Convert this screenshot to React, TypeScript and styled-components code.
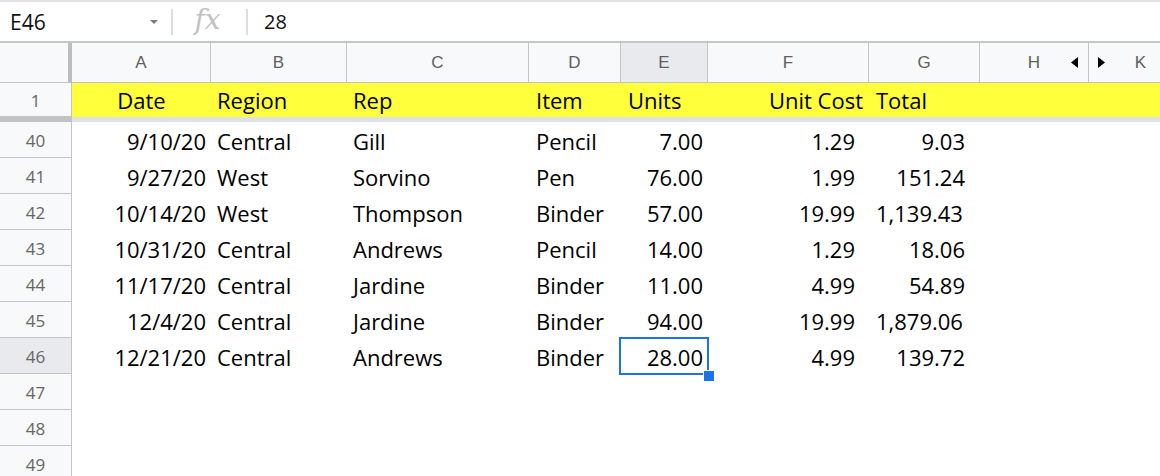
import React from "react";
import styled, { createGlobalStyle } from "styled-components";

const GlobalStyle = createGlobalStyle`
  html, body {
    margin: 0;
    padding: 0;
    background: #ffffff;
    overflow: hidden;
  }
`;

const COLS = "72px 139px 136px 182px 92px 87px 161px 111px 109px 104px";

const Sheet = styled.div`
  width: 1160px;
  height: 476px;
  overflow: hidden;
  border-top: 2px solid #e2e2e2;
  box-sizing: border-box;
  font-family: "Open Sans", "Noto Sans", sans-serif;
`;

const FormulaBar = styled.div`
  display: flex;
  align-items: center;
  height: 39px;
  border-bottom: 2px solid #c6c6c6;
  background: #ffffff;
`;

const NameBox = styled.div`
  display: flex;
  align-items: center;
  width: 171px;
  box-sizing: border-box;
  padding: 0 13px 0 10px;
  font-size: 21px;
  color: #111;
`;

const Caret = styled.span`
  margin-left: auto;
  width: 0;
  height: 0;
  border-left: 4px solid transparent;
  border-right: 4px solid transparent;
  border-top: 4px solid #7a7a7a;
`;

const Divider = styled.div`
  width: 2px;
  height: 26px;
  background: #dedede;
`;

const FxLabel = styled.div`
  width: 73px;
  text-align: center;
  font-family: "DejaVu Serif", "Liberation Serif", serif;
  font-style: italic;
  font-size: 28px;
  line-height: 1;
  color: #c2c2c2;
  padding: 0 4px 4px 0;
  box-sizing: border-box;
`;

const FormulaValue = styled.div`
  padding-left: 16px;
  font-size: 20px;
  color: #111;
`;

const GridRow = styled.div<{ $h: number }>`
  display: grid;
  grid-template-columns: ${COLS};
  height: ${(p) => p.$h}px;
`;

const Corner = styled.div`
  background: #f8f9fa;
  border-right: 5px solid #bdbdbd;
  border-bottom: 1px solid #c4c4c4;
  margin-right: -1px;
`;

const ColHeader = styled.div<{ $active?: boolean }>`
  display: flex;
  align-items: center;
  justify-content: center;
  position: relative;
  background: ${(p) => (p.$active ? "#e8eaed" : "#f8f9fa")};
  border-right: 1px solid #c4c4c4;
  border-bottom: 1px solid #c4c4c4;
  font-family: "Liberation Sans", Arial, sans-serif;
  font-size: 17px;
  color: #5f5f5f;
`;

const Arrow = styled.svg<{ $side: "left" | "right" }>`
  position: absolute;
  top: 14px;
  ${(p) => (p.$side === "left" ? "right: 9px;" : "left: 8px;")}
`;

const RowHeader = styled.div<{ $active?: boolean }>`
  display: flex;
  align-items: center;
  justify-content: center;
  background: ${(p) => (p.$active ? "#e8eaed" : "#f8f9fa")};
  border-right: 1px solid #c4c4c4;
  border-bottom: 1px solid #c4c4c4;
  font-size: 17px;
  color: #666666;
  padding-top: 1px;
  box-sizing: border-box;
`;

const Cell = styled.div<{ $align: string; $pl: number; $pr: number; $bg?: string; $pt?: number }>`
  display: flex;
  align-items: center;
  justify-content: ${(p) =>
    p.$align === "right" ? "flex-end" : p.$align === "center" ? "center" : "flex-start"};
  padding: ${(p) => p.$pt ?? 2}px ${(p) => p.$pr}px 0 ${(p) => p.$pl}px;
  background: ${(p) => p.$bg || "transparent"};
  font-size: 22px;
  color: #000;
  white-space: nowrap;
  position: relative;
`;

const FreezeHead = styled.div`
  background: #c2c2c2;
`;

const FreezeBody = styled.div`
  grid-column: 2 / -1;
  background: #dfe2ea;
`;

const Selection = styled.div`
  position: absolute;
  left: -2px;
  top: -1px;
  right: -1px;
  bottom: -1px;
  border: 2px solid #1a73e8;
  pointer-events: none;
`;

const FillHandle = styled.div`
  position: absolute;
  right: -7px;
  bottom: -8px;
  width: 10px;
  height: 10px;
  background: #1a73e8;
  border: 1px solid #ffffff;
  border-right: none;
  border-bottom: none;
`;

type Col = { align: string; pl: number; pr: number };

const headerCols: Col[] = [
  { align: "center", pl: 0, pr: 0 },
  { align: "left", pl: 6, pr: 0 },
  { align: "left", pl: 6, pr: 0 },
  { align: "left", pl: 7, pr: 0 },
  { align: "left", pl: 7, pr: 0 },
  { align: "right", pl: 0, pr: 6 },
  { align: "left", pl: 7, pr: 0 },
  { align: "left", pl: 6, pr: 0 },
  { align: "left", pl: 6, pr: 0 },
];

const dataCols: Col[] = [
  { align: "right", pl: 0, pr: 5 },
  { align: "left", pl: 6, pr: 0 },
  { align: "left", pl: 6, pr: 0 },
  { align: "left", pl: 7, pr: 0 },
  { align: "right", pl: 0, pr: 5 },
  { align: "right", pl: 0, pr: 14 },
  { align: "right", pl: 0, pr: 15 },
  { align: "left", pl: 6, pr: 0 },
  { align: "left", pl: 6, pr: 0 },
];

const letters = ["A", "B", "C", "D", "E", "F", "G", "H", "K"];
const headers = ["Date", "Region", "Rep", "Item", "Units", "Unit Cost", "Total", "", ""];

const rows: { n: number; v: string[] }[] = [
  { n: 40, v: ["9/10/20", "Central", "Gill", "Pencil", "7.00", "1.29", "9.03"] },
  { n: 41, v: ["9/27/20", "West", "Sorvino", "Pen", "76.00", "1.99", "151.24"] },
  { n: 42, v: ["10/14/20", "West", "Thompson", "Binder", "57.00", "19.99", "1,139.43"] },
  { n: 43, v: ["10/31/20", "Central", "Andrews", "Pencil", "14.00", "1.29", "18.06"] },
  { n: 44, v: ["11/17/20", "Central", "Jardine", "Binder", "11.00", "4.99", "54.89"] },
  { n: 45, v: ["12/4/20", "Central", "Jardine", "Binder", "94.00", "19.99", "1,879.06"] },
  { n: 46, v: ["12/21/20", "Central", "Andrews", "Binder", "28.00", "4.99", "139.72"] },
  { n: 47, v: [] },
  { n: 48, v: [] },
  { n: 49, v: [] },
];

function dataCol(i: number, value: string): Col {
  // totals over a thousand sit flush left in the cell
  if (i === 6 && value.includes(",")) return { align: "left", pl: 7, pr: 0 };
  return dataCols[i];
}

export default function App() {
  return (
    <>
      <GlobalStyle />
      <Sheet>
        <FormulaBar>
          <NameBox>
            E46
            <Caret />
          </NameBox>
          <Divider />
          <FxLabel>fx</FxLabel>
          <Divider />
          <FormulaValue>28</FormulaValue>
        </FormulaBar>

        <GridRow $h={40}>
          <Corner />
          {letters.map((l) => (
            <ColHeader key={l} $active={l === "E"}>
              {l}
              {l === "H" && (
                <Arrow $side="left" width="8" height="11" viewBox="0 0 8 11">
                  <polygon points="7,0 7,11 0,5.5" fill="#000" />
                </Arrow>
              )}
              {l === "K" && (
                <Arrow $side="right" width="8" height="11" viewBox="0 0 8 11">
                  <polygon points="1,0 1,11 8,5.5" fill="#000" />
                </Arrow>
              )}
            </ColHeader>
          ))}
        </GridRow>

        <GridRow $h={34}>
          <RowHeader>1</RowHeader>
          {headers.map((h, i) => (
            <Cell
              key={i}
              $align={headerCols[i].align}
              $pl={headerCols[i].pl}
              $pr={headerCols[i].pr}
              $pt={0}
              $bg="#ffff3b"
            >
              {h}
            </Cell>
          ))}
        </GridRow>

        <GridRow $h={5}>
          <FreezeHead />
          <FreezeBody />
        </GridRow>

        {rows.map((r) => (
          <GridRow key={r.n} $h={36}>
            <RowHeader $active={r.n === 46}>{r.n}</RowHeader>
            {letters.map((_, i) => {
              const value = r.v[i] || "";
              const c = dataCol(i, value);
              return (
                <Cell key={i} $align={c.align} $pl={c.pl} $pr={c.pr}>
                  {value}
                  {r.n === 46 && i === 4 && (
                    <Selection>
                      <FillHandle />
                    </Selection>
                  )}
                </Cell>
              );
            })}
          </GridRow>
        ))}
      </Sheet>
    </>
  );
}
